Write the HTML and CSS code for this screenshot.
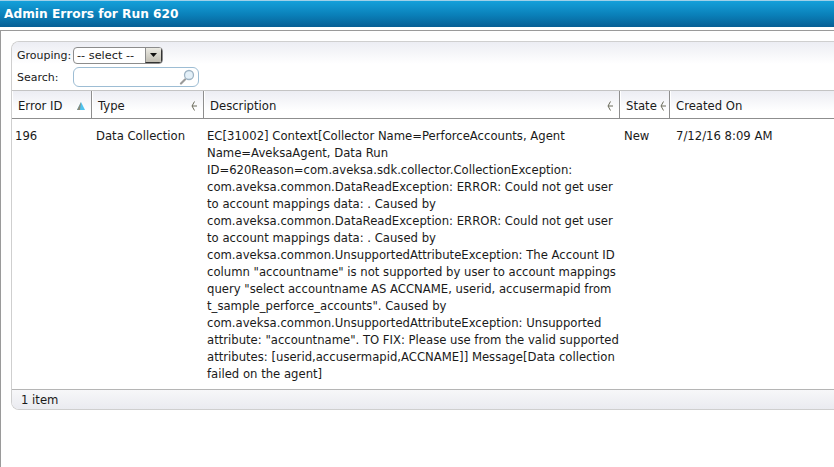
FILE: index.html
```html
<!DOCTYPE html>
<html lang="en">
<head>
<meta charset="utf-8">
<title>Admin Errors for Run 620</title>
<link rel="stylesheet" href="styles.css">
</head>
<body>
<header class="titlebar">Admin Errors for Run 620</header>
<main class="content">
  <section class="panel">
    <div class="filters">
      <div class="filter-row grouping">
        <label class="filter-label">Grouping:</label>
        <div class="select">
          <span class="select-value">-- select --</span>
          <span class="select-btn"><svg width="7" height="4" viewBox="0 0 7 4"><path d="M0 0h7L3.500 4z" fill="#111"/></svg></span>
        </div>
      </div>
      <div class="filter-row search-row">
        <label class="filter-label">Search:</label>
        <div class="search">
          <svg class="lens" width="16" height="16" viewBox="0 0 16 16">
            <path d="M2 14.500l4-4" stroke="#9a9a9a" stroke-width="2.200" stroke-linecap="round" fill="none"/>
            <circle cx="10" cy="6" r="4.500" fill="#e4f0f8" stroke="#9fb4c4" stroke-width="1.300"/>
          </svg>
        </div>
      </div>
    </div>
    <div class="grid-head">
      <div class="th c-id">Error ID<svg class="sort" width="8" height="8" viewBox="0 0 8 8"><path d="M4 0L8 8H0z" fill="#4fc3ee"/><path d="M4 0L0 8h3z" fill="#8a8a7a"/></svg></div>
      <div class="th c-type">Type<svg class="sort" width="6" height="10" viewBox="0 0 6 10"><path d="M3.500 .5L1 5 3.500 9.500M1 5h5" stroke="#6b6b5a" fill="none"/></svg></div>
      <div class="th c-desc">Description<svg class="sort" width="6" height="10" viewBox="0 0 6 10"><path d="M3.500 .5L1 5 3.500 9.500M1 5h5" stroke="#6b6b5a" fill="none"/></svg></div>
      <div class="th c-state">State<svg class="sort" width="6" height="10" viewBox="0 0 6 10"><path d="M3.500 .5L1 5 3.500 9.500M1 5h5" stroke="#6b6b5a" fill="none"/></svg></div>
      <div class="th c-date">Created On</div>
    </div>
    <div class="grid-row">
      <div class="td c-id">196</div>
      <div class="td c-type">Data Collection</div>
      <div class="td c-desc">EC[31002] Context[Collector Name=PerforceAccounts, Agent<br>Name=AveksaAgent, Data Run<br>ID=620Reason=com.aveksa.sdk.collector.CollectionException:<br>com.aveksa.common.DataReadException: ERROR: Could not get user<br>to account mappings data: . Caused by<br>com.aveksa.common.DataReadException: ERROR: Could not get user<br>to account mappings data: . Caused by<br>com.aveksa.common.UnsupportedAttributeException: The Account ID<br>column "accountname" is not supported by user to account mappings<br>query "select accountname AS ACCNAME, userid, accusermapid from<br>t_sample_perforce_accounts". Caused by<br>com.aveksa.common.UnsupportedAttributeException: Unsupported<br>attribute: "accountname". TO FIX: Please use from the valid supported<br>attributes: [userid,accusermapid,ACCNAME]] Message[Data collection<br>failed on the agent]</div>
      <div class="td c-state">New</div>
      <div class="td c-date">7/12/16 8:09 AM</div>
    </div>
    <footer class="grid-foot">1 item</footer>
  </section>
</main>
</body>
</html>
```
FILE: styles.css
```css
html, body {
  margin: 0;
  height: 100%;
  overflow: hidden;
  background: #fff;
}
body {
  width: 834px;
  height: 467px;
  font-family: "DejaVu Sans", sans-serif;
  font-size: 11.650px;
  color: #1a1a1a;
}
.titlebar {
  height: 26px;
  box-sizing: content-box;
  padding-left: 4px;
  line-height: 27px;
  font-family: "DejaVu Sans", sans-serif;
  font-size: 12.200px;
  font-weight: bold;
  color: #fff;
  border-top: 1px solid #9fd0e8;
  background: linear-gradient(#14a0da, #0a7fb8 55%, #075f95);
}
.content {
  margin-top: 3px;
  height: 437px;
  box-sizing: border-box;
  border-top: 1px solid #9a9a9a;
  border-left: 1px solid #9a9a9a;
  padding: 10px 0 0 10px;
}
.panel {
  height: 369px;
  box-sizing: border-box;
  width: 823px;
  display: flex;
  flex-direction: column;
  border: 1px solid #cfcfcf;
  border-right: 0;
  border-radius: 8px 0 0 8px;
  overflow: hidden;
}
.filters {
  height: 48px;
  box-sizing: border-box;
  padding: 3px 0 0 5px;
  background: linear-gradient(#ecedf3, #fff 22px);
}
.filter-row {
  display: flex;
  align-items: center;
}
.grouping { height: 20px; }
.search-row { height: 22px; margin-top: 1px; }
.filter-label {
  width: 56px;
  font-size: 11px;
}
.select {
  width: 90px;
  height: 17px;
  box-sizing: border-box;
  display: flex;
  justify-content: space-between;
  border: 1px solid #8c8c8c;
  border-radius: 4px;
  background: #fff;
  overflow: hidden;
}
.select-value {
  padding-left: 3px;
  font-size: 11.300px;
  line-height: 16px;
}
.select-btn {
  width: 15px;
  display: flex;
  align-items: center;
  justify-content: center;
  background: linear-gradient(#ecebe4, #c0bdb2);
  border-left: 1px solid #8c8c8c;
  border-right: 1px solid #333;
  border-bottom: 1px solid #333;
}
.search {
  width: 126px;
  height: 20px;
  box-sizing: border-box;
  display: flex;
  align-items: center;
  justify-content: flex-end;
  padding-right: 3px;
  border: 1px solid #9dbdd4;
  border-radius: 6px;
}
.grid-head {
  display: flex;
  height: 29px;
  box-sizing: border-box;
  border-top: 1px solid #c4c4c4;
  border-bottom: 1px solid #8e8e8e;
  background: linear-gradient(#ecedf3, #fff 20px);
}
.th {
  display: flex;
  align-items: center;
  justify-content: space-between;
  box-sizing: border-box;
  padding: 2px 6px 0 6px;
  border-right: 1px solid #8e8e8e;
  box-shadow: inset 1px 0 0 #fff;
}
.th:last-child { border-right: 0; }
.c-id { width: 80px; }
.c-type { width: 112px; }
.c-desc { width: 416px; }
.c-state { width: 50px; padding-right: 3px; }
.c-date { width: 164px; }
.grid-row {
  display: flex;
  flex: 1;
  padding-top: 9px;
  line-height: 17px;
}
.td {
  box-sizing: border-box;
  padding-left: 3px;
}
.c-type.td { padding-left: 4px; }
.c-desc.td { white-space: nowrap; }
.c-state.td { padding-left: 4px; }
.c-date.td { padding-left: 6px; }
.grid-foot {
  height: 20px;
  box-sizing: border-box;
  padding-left: 9px;
  line-height: 20px;
  border-top: 1px solid #b5b5b5;
  background: linear-gradient(#f7f7f9, #eaebf0);
}
```
